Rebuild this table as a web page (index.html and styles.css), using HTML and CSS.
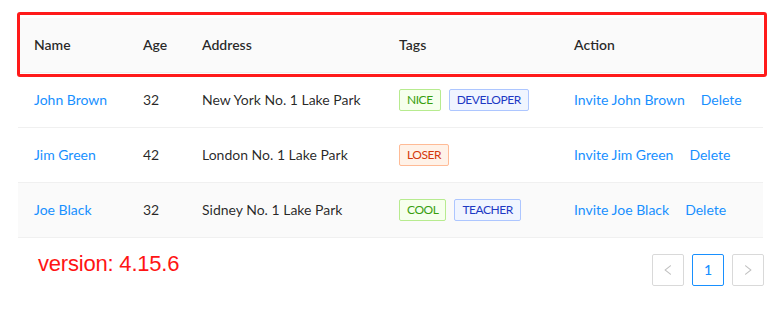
FILE: index.html
```html
<!DOCTYPE html>
<html>
<head>
<meta charset="utf-8">
<link rel="stylesheet" href="styles.css">
</head>
<body>
<div class="page">
  <table class="table">
    <colgroup>
      <col class="c-name"><col class="c-age"><col class="c-addr"><col class="c-tags"><col class="c-action">
    </colgroup>
    <thead>
      <tr><th>Name</th><th>Age</th><th>Address</th><th>Tags</th><th>Action</th></tr>
    </thead>
    <tbody>
      <tr>
        <td><a class="link">John Brown</a></td>
        <td>32</td>
        <td>New York No. 1 Lake Park</td>
        <td><span class="tag tag-green">NICE</span><span class="tag tag-geekblue">DEVELOPER</span></td>
        <td><div class="space"><a class="link">Invite John Brown</a><a class="link">Delete</a></div></td>
      </tr>
      <tr>
        <td><a class="link">Jim Green</a></td>
        <td>42</td>
        <td>London No. 1 Lake Park</td>
        <td><span class="tag tag-volcano">LOSER</span></td>
        <td><div class="space"><a class="link">Invite Jim Green</a><a class="link">Delete</a></div></td>
      </tr>
      <tr class="hover">
        <td><a class="link">Joe Black</a></td>
        <td>32</td>
        <td>Sidney No. 1 Lake Park</td>
        <td><span class="tag tag-green">COOL</span><span class="tag tag-geekblue">TEACHER</span></td>
        <td><div class="space"><a class="link">Invite Joe Black</a><a class="link">Delete</a></div></td>
      </tr>
    </tbody>
  </table>
  <div class="footer">
    <div class="version">version: 4.15.6</div>
    <ul class="pagination">
      <li class="page-item disabled"><svg viewBox="64 64 896 896" width="12" height="12" fill="currentColor"><path d="M724 218.3V141c0-6.7-7.7-10.4-12.9-6.3L260.3 486.8a31.86 31.86 0 000 50.3l450.8 352.1c5.3 4.1 12.9.4 12.9-6.3v-77.3c0-4.9-2.3-9.6-6.1-12.6l-360-281 360-281.1c3.8-3 6.1-7.7 6.1-12.6z"/></svg></li>
      <li class="page-item active">1</li>
      <li class="page-item disabled"><svg viewBox="64 64 896 896" width="12" height="12" fill="currentColor"><path d="M765.7 486.8L314.9 134.7A7.97 7.97 0 00302 141v77.3c0 4.9 2.3 9.6 6.1 12.6l360 281.1-360 281.1c-3.8 3-6.1 7.7-6.1 12.6V883c0 6.6 7.6 10.3 12.9 6.3l450.8-352.1a31.96 31.96 0 000-50.4z"/></svg></li>
    </ul>
  </div>
  <div class="highlight"></div>
</div>
</body>
</html>
```

FILE: styles.css
```css
* { box-sizing: border-box; }
html, body { margin: 0; padding: 0; background: #fff; }
body {
  font-family: Lato, "Liberation Sans", Arial, sans-serif;
  font-size: 14px;
  color: rgba(0, 0, 0, 0.85);
  line-height: 1.5715;
}
.page {
  position: relative;
  padding: 18px 16px 0 18px;
}
.table {
  width: 100%;
  border-collapse: collapse;
  table-layout: fixed;
}
.c-name { width: 109px; }
.c-age { width: 59px; }
.c-addr { width: 197px; }
.c-tags { width: 175px; }
.c-action { width: 205px; }
.table th {
  text-align: left;
  font-weight: 600;
  background: #fafafa;
  padding: 16px;
  border-bottom: 1px solid #f0f0f0;
  color: rgba(0, 0, 0, 0.85);
}
.table td {
  padding: 16px;
  border-bottom: 1px solid #f0f0f0;
  white-space: nowrap;
}
.table tr.hover td { background: #fafafa; }
.link { color: #1890ff; text-decoration: none; cursor: pointer; }
.space { display: flex; gap: 16px; }
.tag {
  display: inline-block;
  height: 22px;
  padding: 0 7px;
  margin-right: 8px;
  font-size: 12px;
  line-height: 20px;
  letter-spacing: -0.45px;
  border: 1px solid;
  border-radius: 2px;
  vertical-align: top;
}
.tag-green { color: #389e0d; background: #f6ffed; border-color: #b7eb8f; }
.tag-geekblue { color: #1d39c4; background: #f0f5ff; border-color: #adc6ff; }
.tag-volcano { color: #d4380d; background: #fff2e8; border-color: #ffbb96; }
.footer {
  display: flex;
  justify-content: space-between;
  align-items: flex-start;
  margin-top: 16px;
  padding-left: 20px;
}
.version {
  font-family: "Liberation Sans", Arial, sans-serif;
  font-size: 22px;
  line-height: 22px;
  margin-top: -1px;
  letter-spacing: -0.2px;
  color: #ff1414;
}
.pagination {
  display: flex;
  gap: 8px;
  list-style: none;
  margin: 0 -1px 0 0;
  padding: 0;
}
.page-item {
  width: 32px;
  height: 32px;
  border: 1px solid #d9d9d9;
  border-radius: 2px;
  display: flex;
  align-items: center;
  justify-content: center;
  line-height: 30px;
}
.page-item.disabled { color: rgba(0, 0, 0, 0.25); }
.page-item.active { border-color: #1890ff; color: #1890ff; font-weight: 500; }
.highlight {
  position: absolute;
  left: 17px;
  top: 12px;
  width: 750px;
  height: 65px;
  border: 3px solid #ff1a1a;
  border-radius: 3px;
  pointer-events: none;
}
```
